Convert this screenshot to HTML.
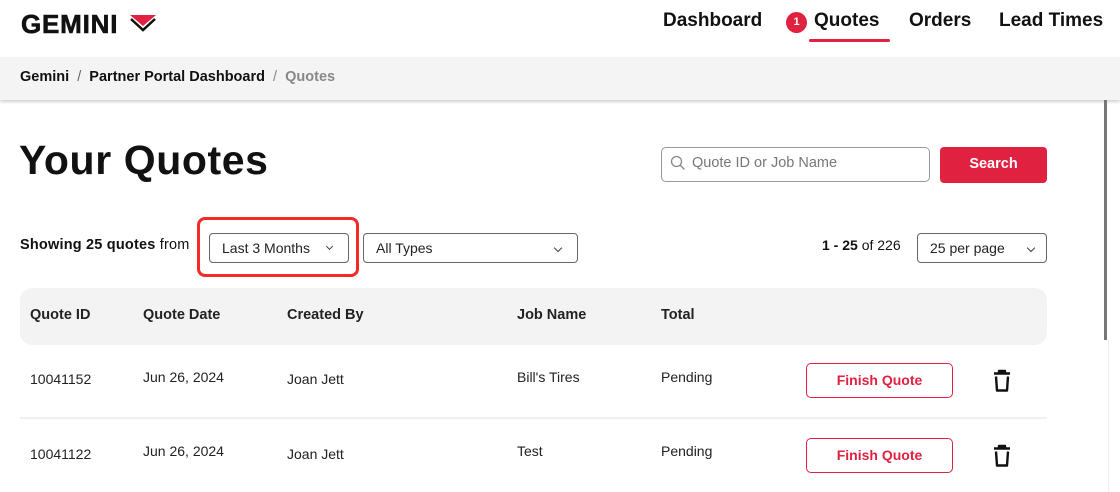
<!DOCTYPE html>
<html><head><meta charset="utf-8"><style>
*{margin:0;padding:0;box-sizing:border-box}
body{width:1120px;height:492px;overflow:hidden;background:#fff;font-family:"Liberation Sans",sans-serif;color:#111;position:relative}
.a{position:absolute;white-space:nowrap}
.b{font-weight:bold}
.hdr{left:0;top:0;width:1120px;height:57px;background:#fff}
.crumb{left:0;top:57px;width:1120px;height:43px;background:#f4f4f4;box-shadow:0 2px 3px rgba(0,0,0,.18)}
.sel{border:1px solid #666;border-radius:4px;height:30px;font-size:14px;padding:6px 12px;color:#222}
.chev{position:absolute;right:12px;top:11px;width:6px;height:6px;border-right:1.2px solid #444;border-bottom:1.2px solid #444;transform:rotate(45deg)}
.th{font-size:14.5px;font-weight:bold;top:307px;color:#222}
.td{font-size:14px;color:#222}
.fin{width:147px;height:35px;border:1px solid #e0213f;border-radius:5px;color:#e0213f;font-weight:bold;font-size:14px;text-align:center;line-height:33px}
</style></head><body>
<div class="a hdr"></div>
<div class="a b" style="left:21px;top:9px;font-size:26px;letter-spacing:0.8px;-webkit-text-stroke:0.6px #111">GEMINI</div>
<svg class="a" style="left:128px;top:13px" width="30" height="20" viewBox="0 0 30 20"><polygon points="2,2 28,2 15,13" fill="#e0213f"/><polyline points="3,6 15,17 27,6" fill="none" stroke="#111" stroke-width="2.5"/></svg>
<div class="a b" style="left:663px;top:10px;font-size:19px">Dashboard</div>
<div class="a" style="left:786px;top:12px;width:21px;height:21px;border-radius:50%;background:#e0213f;color:#fff;font-size:11px;font-weight:bold;text-align:center;line-height:21px">1</div>
<div class="a b" style="left:814px;top:10px;font-size:19px">Quotes</div>
<div class="a" style="left:809px;top:39px;width:81px;height:3px;background:#e0213f;border-radius:2px"></div>
<div class="a b" style="left:909px;top:10px;font-size:19px">Orders</div>
<div class="a b" style="left:999px;top:10px;font-size:19px">Lead Times</div>
<div class="a crumb"></div>
<div class="a b" style="left:20px;top:69px;font-size:14.5px">Gemini <span style="font-weight:normal;color:#666">&nbsp;/&nbsp;</span> Partner Portal Dashboard <span style="font-weight:normal;color:#888">&nbsp;/&nbsp;</span> <span style="color:#888">Quotes</span></div>
<div class="a" style="left:1104px;top:100px;width:3px;height:240px;background:#777"></div>
<div class="a" style="left:1108px;top:340px;width:1px;height:152px;background:#eee"></div>
<div class="a b" style="left:19px;top:137px;font-size:41px;letter-spacing:0.6px">Your Quotes</div>
<div class="a" style="left:661px;top:147px;width:269px;height:35px;border:1px solid #999;border-radius:5px"></div>
<svg class="a" style="left:670px;top:155px" width="16" height="16" viewBox="0 0 16 16"><circle cx="6.5" cy="6.5" r="5" fill="none" stroke="#888" stroke-width="1.3"/><line x1="10" y1="10" x2="14.5" y2="14.5" stroke="#888" stroke-width="1.3"/></svg>
<div class="a" style="left:692px;top:155px;font-size:14.5px;color:#777">Quote ID or Job Name</div>
<div class="a b" style="left:940px;top:147px;width:107px;height:36px;background:#e0213f;border-radius:4px;color:#fff;font-size:14.5px;text-align:center;line-height:34px">Search</div>
<div class="a" style="left:20px;top:237px;font-size:14.5px;letter-spacing:0.2px"><b>Showing 25 quotes</b> from</div>
<div class="a" style="left:197px;top:217px;width:162px;height:60px;border:3px solid #f22a2a;border-radius:8px;background:#fff"></div>
<div class="a sel" style="left:209px;top:233px;width:140px">Last 3 Months<span class="chev" style="right:16px;top:10px;width:5px;height:5px"></span></div>
<div class="a sel" style="left:363px;top:233px;width:215px">All Types<span class="chev" style="right:16px"></span></div>
<div class="a" style="left:822px;top:237px;font-size:14px"><b>1 - 25</b> of 226</div>
<div class="a sel" style="left:917px;top:233px;width:130px">25 per page<span class="chev"></span></div>
<div class="a" style="left:20px;top:288px;width:1027px;height:57px;background:#f3f3f3;border-radius:12px"></div>
<div class="a th" style="left:30px">Quote ID</div>
<div class="a th" style="left:143px">Quote Date</div>
<div class="a th" style="left:287px">Created By</div>
<div class="a th" style="left:517px">Job Name</div>
<div class="a th" style="left:661px">Total</div>
<div class="a td" style="left:30px;top:371px">10041152</div>
<div class="a td" style="left:143px;top:369px">Jun 26, 2024</div>
<div class="a td" style="left:287px;top:371px">Joan Jett</div>
<div class="a td" style="left:517px;top:369px">Bill's Tires</div>
<div class="a td" style="left:661px;top:369px">Pending</div>
<div class="a fin" style="left:806px;top:363px">Finish Quote</div>
<div class="a" style="left:20px;top:417px;width:1027px;height:2px;background:#f0f0f0"></div>
<div class="a td" style="left:30px;top:446px">10041122</div>
<div class="a td" style="left:143px;top:443px">Jun 26, 2024</div>
<div class="a td" style="left:287px;top:446px">Joan Jett</div>
<div class="a td" style="left:517px;top:443px">Test</div>
<div class="a td" style="left:661px;top:443px">Pending</div>
<div class="a fin" style="left:806px;top:438px">Finish Quote</div>
<svg class="a" style="left:992px;top:369px" width="20" height="24" viewBox="0 0 20 24"><path d="M2 4.5h16M7 4.5V2h6v2.5M4 7.5l1 14h10l1-14" fill="none" stroke="#111" stroke-width="2.4" stroke-linejoin="round"/></svg>
<svg class="a" style="left:992px;top:444px" width="20" height="24" viewBox="0 0 20 24"><path d="M2 4.5h16M7 4.5V2h6v2.5M4 7.5l1 14h10l1-14" fill="none" stroke="#111" stroke-width="2.4" stroke-linejoin="round"/></svg>
</body></html>
